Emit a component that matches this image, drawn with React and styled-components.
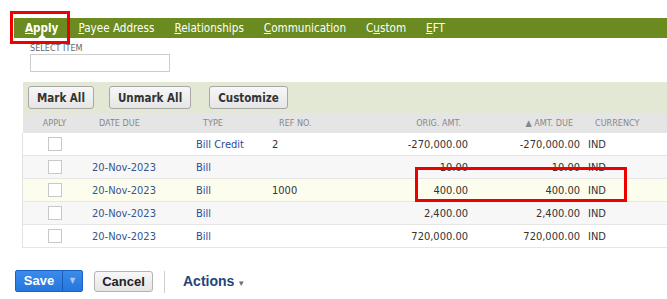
import React from 'react';
import styled, { createGlobalStyle } from 'styled-components';

const GlobalStyle = createGlobalStyle`
  html, body {
    margin: 0;
    padding: 0;
    background: #ffffff;
  }
  body {
    font-family: "DejaVu Sans Condensed", "DejaVu Sans", sans-serif;
    color: #333;
  }
`

const Page = styled.div`
  position: relative;
  width: 667px;
  height: 299px;
  padding-top: 18px;
  box-sizing: border-box;
  overflow: hidden;
`

const TabBar = styled.div`
  display: flex;
  align-items: center;
  gap: 20px;
  height: 20px;
  margin-left: 14px;
  padding-left: 11px;
  background: #6b8a1f;
`

const Tab = styled.div`
  position: relative;
  height: 20px;
  line-height: 20px;
  font-size: 11.6px;
  color: #ffffff;
  font-weight: ${p => (p.$active ? 'bold' : 'normal')};
  white-space: nowrap;

  u {
    text-decoration-thickness: 1px;
    text-underline-offset: 1px;
  }

  ${p => p.$active && `
    &::after {
      content: '';
      position: absolute;
      left: 50%;
      bottom: 0;
      margin-left: -4px;
      border-left: 4px solid transparent;
      border-right: 4px solid transparent;
      border-bottom: 4px solid #ffffff;
    }
  `}
`

const SelectField = styled.div`
  display: flex;
  flex-direction: column;
  margin: 5px 0 0 30px;
`

const FieldLabel = styled.label`
  font-size: 9px;
  line-height: 11px;
  color: #666;
  text-transform: uppercase;
`

const TextInput = styled.input`
  width: 140px;
  height: 18px;
  box-sizing: border-box;
  border: 1px solid #cccccc;
  outline: none;
`

const Sublist = styled.div`
  margin: 10px 0 0 23px;
`

const Toolbar = styled.div`
  display: flex;
  align-items: center;
  gap: 15px;
  height: 31px;
  padding: 0 5px;
  background: #e3e8d4;
`

const ToolButton = styled.button`
  height: 23px;
  padding: 0 8px;
  margin-left: ${p => p.$shift || 0}px;
  font-family: "DejaVu Sans Condensed", "DejaVu Sans", sans-serif;
  font-size: 11.5px;
  font-weight: bold;
  color: #333;
  background: linear-gradient(#f7f7f7, #e6e6e6);
  border: 1px solid #a8a8a8;
  border-radius: 3px;
`

const columns = [
  { key: 'apply', label: 'APPLY', w: 63, align: 'center', pd: 0, ph: 0 },
  { key: 'date', label: 'DATE DUE', w: 104, align: 'left', pd: 6, ph: 13 },
  { key: 'type', label: 'TYPE', w: 76, align: 'left', pd: 6, ph: 13 },
  { key: 'ref', label: 'REF NO.', w: 90, align: 'left', pd: 6, ph: 13 },
  { key: 'orig', label: 'ORIG. AMT.', w: 118, align: 'right', pd: 6, ph: 13 },
  { key: 'due', label: '\u25B2 AMT. DUE', w: 108, align: 'right', pd: 2, ph: 9 },
  { key: 'cur', label: 'CURRENCY', w: 0, align: 'left', pd: 6, ph: 13 },
]

const template = columns.map(c => (c.w ? `${c.w}px` : '1fr')).join(' ')

const HeaderRow = styled.div`
  display: grid;
  grid-template-columns: ${template};
  height: 20px;
  background: #e5e5e5;
`

const HeadCell = styled.div`
  font-size: 9px;
  line-height: 20px;
  color: #888;
  text-align: ${p => p.$align};
  padding: 0 ${p => p.$pad}px;
  white-space: nowrap;
`

const Body = styled.div`
  border-left: 1px solid #e2e2e2;
  margin-left: -1px;
`

const Row = styled.div`
  display: grid;
  grid-template-columns: ${template};
  height: 22px;
  align-items: center;
  border-bottom: 1px solid #e6e6e6;
  background: ${p => p.$bg};
`

const Cell = styled.div`
  font-size: 11px;
  color: ${p => p.$color || '#333'};
  text-align: ${p => p.$align};
  padding: 0 ${p => p.$pad}px;
  white-space: nowrap;
`

const Check = styled.span`
  display: inline-block;
  width: 12px;
  height: 12px;
  border: 1px solid #c8c8c8;
  background: #fff;
  vertical-align: middle;
`

const Footer = styled.div`
  display: flex;
  align-items: center;
  margin: 21px 0 0 15px;
`

const SplitButton = styled.div`
  display: flex;
  height: 20px;
  border: 1px solid #1c62c4;
  border-radius: 2px;
  background: linear-gradient(#3a8bea, #2477de);
  overflow: hidden;
`

const SplitMain = styled.span`
  width: 46px;
  text-align: center;
  line-height: 20px;
  font-family: "Liberation Sans", Arial, sans-serif;
  font-size: 13px;
  font-weight: bold;
  color: #fff;
  border-right: 1px solid #1a5cb8;
`

const SplitArrow = styled.span`
  width: 19px;
  text-align: center;
  line-height: 20px;
  font-size: 8px;
  color: #a9c9f2;
`

const CancelButton = styled.button`
  height: 21px;
  width: 59px;
  margin-left: 11px;
  padding: 0;
  font-family: "Liberation Sans", Arial, sans-serif;
  font-size: 13px;
  font-weight: bold;
  color: #222;
  background: linear-gradient(#f8f8f8, #e5e5e5);
  border: 1px solid #b4b4b4;
  border-radius: 3px;
`

const Divider = styled.span`
  width: 1px;
  height: 22px;
  margin: 2px 0 0 11px;
  background: #cccccc;
`

const ActionsMenu = styled.span`
  margin-left: 18px;
  font-family: "Liberation Sans", Arial, sans-serif;
  font-size: 14px;
  font-weight: bold;
  color: #24447a;

  small {
    font-size: 8px;
    color: #6a7080;
    margin-left: 3px;
  }
`

const Marker = styled.div`
  position: absolute;
  left: ${p => p.$x}px;
  top: ${p => p.$y}px;
  width: ${p => p.$w}px;
  height: ${p => p.$h}px;
  box-sizing: border-box;
  border: 3px solid #ee0000;
  pointer-events: none;
`

const tabs = [
  { pre: '', key: 'A', rest: 'pply', active: true },
  { pre: '', key: 'P', rest: 'ayee Address' },
  { pre: '', key: 'R', rest: 'elationships' },
  { pre: '', key: 'C', rest: 'ommunication' },
  { pre: 'C', key: 'u', rest: 'stom' },
  { pre: '', key: 'E', rest: 'FT' },
]

const rows = [
  { date: '', type: 'Bill Credit', ref: '2', orig: '-270,000.00', due: '-270,000.00', bg: '#ffffff' },
  { date: '20-Nov-2023', type: 'Bill', ref: '', orig: '10.00', due: '10.00', bg: '#f7f7f7' },
  { date: '20-Nov-2023', type: 'Bill', ref: '1000', orig: '400.00', due: '400.00', bg: '#fdfdee' },
  { date: '20-Nov-2023', type: 'Bill', ref: '', orig: '2,400.00', due: '2,400.00', bg: '#f7f7f7' },
  { date: '20-Nov-2023', type: 'Bill', ref: '', orig: '720,000.00', due: '720,000.00', bg: '#ffffff' },
]

const linkColor = { date: '#34558f', type: '#2a4b9b' }

export default function App() {
  return (
    <Page>
      <GlobalStyle />
      <TabBar>
        {tabs.map(t => (
          <Tab key={t.key + t.rest} $active={t.active}>
            {t.pre}<u>{t.key}</u>{t.rest}
          </Tab>
        ))}
      </TabBar>

      <SelectField>
        <FieldLabel>Select Item</FieldLabel>
        <TextInput type="text" />
      </SelectField>

      <Sublist>
        <Toolbar>
          <ToolButton>Mark All</ToolButton>
          <ToolButton>Unmark All</ToolButton>
          <ToolButton $shift={3}>Customize</ToolButton>
        </Toolbar>
        <HeaderRow>
          {columns.map(c => (
            <HeadCell key={c.key} $align={c.align} $pad={c.ph}>{c.label}</HeadCell>
          ))}
        </HeaderRow>
        <Body>
          {rows.map((r, i) => (
            <Row key={i} $bg={r.bg}>
              {columns.map(c => (
                <Cell key={c.key} $align={c.align} $pad={c.pd} $color={linkColor[c.key]}>
                  {c.key === 'apply' ? <Check /> : c.key === 'cur' ? 'IND' : r[c.key]}
                </Cell>
              ))}
            </Row>
          ))}
        </Body>
      </Sublist>

      <Footer>
        <SplitButton>
          <SplitMain>Save</SplitMain>
          <SplitArrow>▼</SplitArrow>
        </SplitButton>
        <CancelButton>Cancel</CancelButton>
        <Divider />
        <ActionsMenu>Actions<small>▼</small></ActionsMenu>
      </Footer>

      <Marker $x={10} $y={11} $w={60} $h={33} />
      <Marker $x={415} $y={167} $w={212} $h={35} />
    </Page>
  );
}
